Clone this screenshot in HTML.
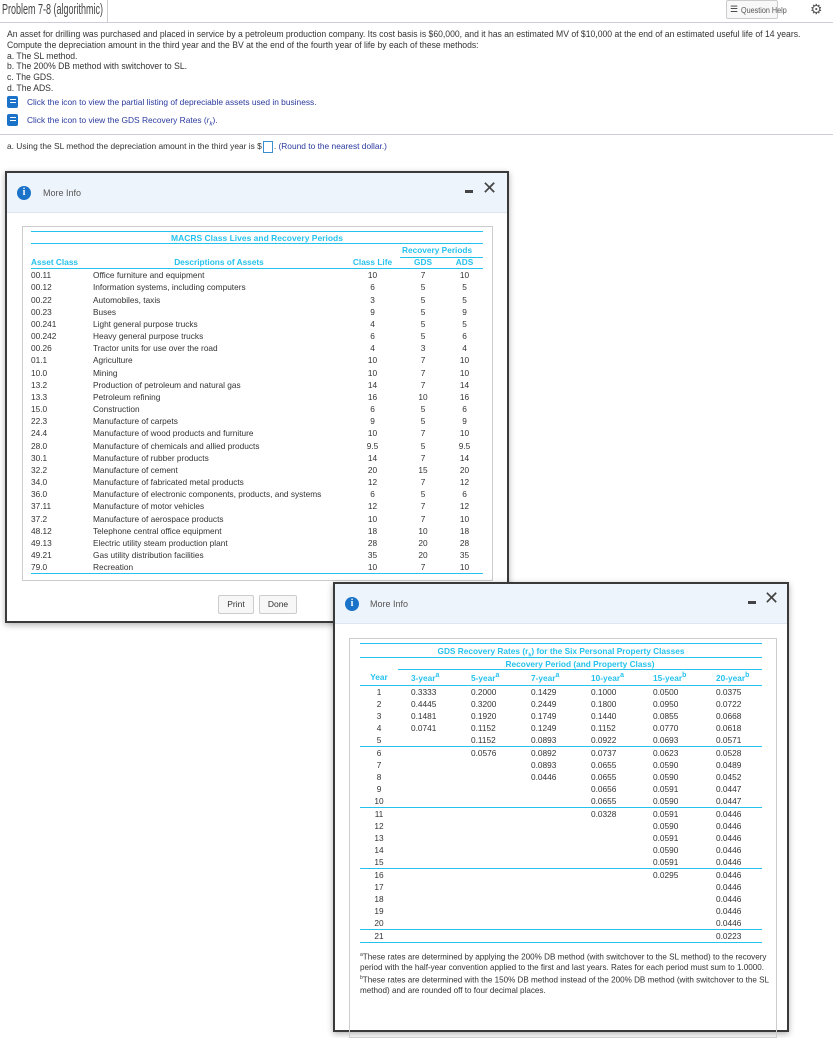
<!DOCTYPE html>
<html><head><meta charset="utf-8"><style>
*{margin:0;padding:0;box-sizing:border-box}
body{width:833px;height:1024px;overflow:hidden;background:#fff;font-family:"Liberation Sans",Arial,sans-serif;color:#333;position:relative;font-size:8.5px}
.a{position:absolute;white-space:nowrap}
.cy{color:#25c2ee;font-weight:bold}
.dlg{position:absolute;background:#fff;border:2px solid #3a3a3a;box-shadow:0 2px 6px rgba(0,0,0,.3)}
.hd{position:absolute;left:0;right:0;top:0;height:40px;background:#eef4fb;border-bottom:1px solid #dde6f0}
.ic{position:absolute;width:14px;height:14px;border-radius:50%;background:#1a73c9;color:#fff;font:bold 10px "Liberation Serif",serif;text-align:center;line-height:14px}
.mi{position:absolute;font-size:9px;color:#555}
.x{position:absolute;font-size:18px;color:#444;font-weight:normal}
.mn{position:absolute;width:8px;height:3px;background:#444}
table{border-collapse:collapse;table-layout:fixed}
td{padding:0;height:12.17px;line-height:12.17px;font-size:8.3px;white-space:nowrap;overflow:visible}
.m td:nth-child(3),.m td:nth-child(4),.m td:nth-child(5){text-align:center}
.g td{height:12px;line-height:12px;padding-left:13px}
.g td:first-child{text-align:center;padding-left:0}
.g tr.s td{border-bottom:1.5px solid #25c2ee}
.lk{color:#2a3a9e}
.bk{position:absolute;width:11px;height:12px;background:#1a73c9;border-radius:2px}
.bk:after{content:"";position:absolute;left:3px;top:3px;width:6px;height:1px;background:#fff;box-shadow:0 3px 0 #fff}
</style></head><body>
<div class="a" style="left:2px;top:1px;font-size:15px;color:#444;transform:scaleX(0.6);transform-origin:0 0">Problem 7-8 (algorithmic)</div>
<div class="a" style="left:107px;top:0;width:1px;height:22px;background:#ccc"></div>
<div class="a" style="left:0;top:22px;width:833px;height:1px;background:#ccd"></div>
<div class="a" style="left:726px;top:0;width:52px;height:19px;border:1px solid #ccc;border-radius:2px;background:#f8f8f8"></div>
<div class="a" style="left:730px;top:4px;font-size:9px;color:#333">☰</div>
<div class="a" style="left:741px;top:5px;font-size:8.5px;color:#555;transform:scaleX(0.85);transform-origin:0 0">Question Help</div>
<div class="a" style="left:810px;top:1px;font-size:14px;color:#555">⚙</div>

<div class="a" style="left:7px;top:29px;line-height:10.8px;font-size:8.8px;color:#333;transform:scaleX(0.98);transform-origin:0 0">An asset for drilling was purchased and placed in service by a petroleum production company. Its cost basis is $60,000, and it has an estimated MV of $10,000 at the end of an estimated useful life of 14 years.<br>Compute the depreciation amount in the third year and the BV at the end of the fourth year of life by each of these methods:<br>a. The SL method.<br>b. The 200% DB method with switchover to SL.<br>c. The GDS.<br>d. The ADS.</div>
<div class="bk" style="left:7px;top:96px"></div>
<div class="a lk" style="left:27px;top:97px;font-size:8.4px">Click the icon to view the partial listing of depreciable assets used in business.</div>
<div class="bk" style="left:7px;top:114px"></div>
<div class="a lk" style="left:27px;top:115px;font-size:8.4px">Click the icon to view the GDS Recovery Rates (<i>r<sub style="font-size:6px">k</sub></i>).</div>
<div class="a" style="left:0;top:134px;width:833px;height:1px;background:#ccd"></div>
<div class="a" style="left:7px;top:141px;font-size:8.4px">a. Using the SL method the depreciation amount in the third year is $<span style="display:inline-block;width:10px;height:12px;border:1px solid #3a8fd0;vertical-align:middle;margin:0 1px"></span>. <span class="lk">(Round to the nearest dollar.)</span></div>

<div class="dlg" style="left:5px;top:171px;width:504px;height:452px">
 <div class="hd"></div>
 <div class="ic" style="left:10px;top:13px">i</div>
 <div class="mi" style="left:36px;top:15px">More Info</div>
 <div class="mn" style="left:458px;top:17px"></div>
 <div class="x" style="left:475px;top:5px">✕</div>
 <div class="a" style="left:15px;top:53px;width:471px;height:355px;border:1px solid #ccc"></div>
 <div class="a" style="left:24px;top:58px">
  <div style="width:452px;border-top:1.5px solid #25c2ee;height:12px;text-align:center;line-height:12px;font-size:8.5px" class="cy">MACRS Class Lives and Recovery Periods</div>
  <div style="width:452px;border-top:1.5px solid #25c2ee"></div>
  <div class="a cy" style="left:371px;top:14px;font-size:8.3px">Recovery Periods</div>
  <div class="a" style="left:369px;top:26px;width:83px;border-top:1.5px solid #25c2ee"></div>
  <table class="m" style="width:452px;margin-top:12px">
   <colgroup><col style="width:62px"><col style="width:252px"><col style="width:55px"><col style="width:46px"><col style="width:37px"></colgroup>
   <tr class="cy" style="border-bottom:1.5px solid #25c2ee"><td>Asset Class</td><td style="text-align:center">Descriptions of Assets</td><td>Class Life</td><td>GDS</td><td>ADS</td></tr>
   <tr><td>00.11</td><td>Office furniture and equipment</td><td>10</td><td>7</td><td>10</td></tr>
   <tr><td>00.12</td><td>Information systems, including computers</td><td>6</td><td>5</td><td>5</td></tr>
   <tr><td>00.22</td><td>Automobiles, taxis</td><td>3</td><td>5</td><td>5</td></tr>
   <tr><td>00.23</td><td>Buses</td><td>9</td><td>5</td><td>9</td></tr>
   <tr><td>00.241</td><td>Light general purpose trucks</td><td>4</td><td>5</td><td>5</td></tr>
   <tr><td>00.242</td><td>Heavy general purpose trucks</td><td>6</td><td>5</td><td>6</td></tr>
   <tr><td>00.26</td><td>Tractor units for use over the road</td><td>4</td><td>3</td><td>4</td></tr>
   <tr><td>01.1</td><td>Agriculture</td><td>10</td><td>7</td><td>10</td></tr>
   <tr><td>10.0</td><td>Mining</td><td>10</td><td>7</td><td>10</td></tr>
   <tr><td>13.2</td><td>Production of petroleum and natural gas</td><td>14</td><td>7</td><td>14</td></tr>
   <tr><td>13.3</td><td>Petroleum refining</td><td>16</td><td>10</td><td>16</td></tr>
   <tr><td>15.0</td><td>Construction</td><td>6</td><td>5</td><td>6</td></tr>
   <tr><td>22.3</td><td>Manufacture of carpets</td><td>9</td><td>5</td><td>9</td></tr>
   <tr><td>24.4</td><td>Manufacture of wood products and furniture</td><td>10</td><td>7</td><td>10</td></tr>
   <tr><td>28.0</td><td>Manufacture of chemicals and allied products</td><td>9.5</td><td>5</td><td>9.5</td></tr>
   <tr><td>30.1</td><td>Manufacture of rubber products</td><td>14</td><td>7</td><td>14</td></tr>
   <tr><td>32.2</td><td>Manufacture of cement</td><td>20</td><td>15</td><td>20</td></tr>
   <tr><td>34.0</td><td>Manufacture of fabricated metal products</td><td>12</td><td>7</td><td>12</td></tr>
   <tr><td>36.0</td><td>Manufacture of electronic components, products, and systems</td><td>6</td><td>5</td><td>6</td></tr>
   <tr><td>37.11</td><td>Manufacture of motor vehicles</td><td>12</td><td>7</td><td>12</td></tr>
   <tr><td>37.2</td><td>Manufacture of aerospace products</td><td>10</td><td>7</td><td>10</td></tr>
   <tr><td>48.12</td><td>Telephone central office equipment</td><td>18</td><td>10</td><td>18</td></tr>
   <tr><td>49.13</td><td>Electric utility steam production plant</td><td>28</td><td>20</td><td>28</td></tr>
   <tr><td>49.21</td><td>Gas utility distribution facilities</td><td>35</td><td>20</td><td>35</td></tr>
   <tr style="border-bottom:1.5px solid #25c2ee"><td>79.0</td><td>Recreation</td><td>10</td><td>7</td><td>10</td></tr>
  </table>
 </div>
 <div class="a" style="left:211px;top:422px;width:36px;height:19px;border:1px solid #ccc;border-radius:2px;background:#f7f7f7;text-align:center;line-height:17px;font-size:8.5px">Print</div>
 <div class="a" style="left:252px;top:422px;width:38px;height:19px;border:1px solid #ccc;border-radius:2px;background:#f7f7f7;text-align:center;line-height:17px;font-size:8.5px">Done</div>
</div>

<div class="dlg" style="left:333px;top:582px;width:456px;height:450px">
 <div class="hd"></div>
 <div class="ic" style="left:10px;top:13px">i</div>
 <div class="mi" style="left:35px;top:15px">More Info</div>
 <div class="mn" style="left:413px;top:17px"></div>
 <div class="x" style="left:429px;top:4px">✕</div>
 <div class="a" style="left:14px;top:54px;width:428px;height:400px;border:1px solid #ccc"></div>
 <div class="a" style="left:25px;top:59px;width:402px">
  <div style="border-top:1.5px solid #25c2ee;height:14px;text-align:center;line-height:14px;font-size:8.3px" class="cy">GDS Recovery Rates (r<sub style="font-size:5.5px">k</sub>) for the Six Personal Property Classes</div>
  <div style="border-top:1.5px solid #25c2ee;height:12px;text-align:center;line-height:12px;font-size:8.3px;padding-left:38px" class="cy">Recovery Period (and Property Class)</div>
  <div style="margin-left:38px;border-top:1.5px solid #25c2ee"></div>
  <table class="g" style="width:402px">
   <colgroup><col style="width:38px"><col style="width:60px"><col style="width:60px"><col style="width:60px"><col style="width:62px"><col style="width:63px"><col style="width:59px"></colgroup>
   <tr class="cy s" style="height:15px"><td>Year</td><td>3-year<sup>a</sup></td><td>5-year<sup>a</sup></td><td>7-year<sup>a</sup></td><td>10-year<sup>a</sup></td><td>15-year<sup>b</sup></td><td>20-year<sup>b</sup></td></tr>
   <tr><td>1</td><td>0.3333</td><td>0.2000</td><td>0.1429</td><td>0.1000</td><td>0.0500</td><td>0.0375</td></tr>
   <tr><td>2</td><td>0.4445</td><td>0.3200</td><td>0.2449</td><td>0.1800</td><td>0.0950</td><td>0.0722</td></tr>
   <tr><td>3</td><td>0.1481</td><td>0.1920</td><td>0.1749</td><td>0.1440</td><td>0.0855</td><td>0.0668</td></tr>
   <tr><td>4</td><td>0.0741</td><td>0.1152</td><td>0.1249</td><td>0.1152</td><td>0.0770</td><td>0.0618</td></tr>
   <tr class="s"><td>5</td><td></td><td>0.1152</td><td>0.0893</td><td>0.0922</td><td>0.0693</td><td>0.0571</td></tr>
   <tr><td>6</td><td></td><td>0.0576</td><td>0.0892</td><td>0.0737</td><td>0.0623</td><td>0.0528</td></tr>
   <tr><td>7</td><td></td><td></td><td>0.0893</td><td>0.0655</td><td>0.0590</td><td>0.0489</td></tr>
   <tr><td>8</td><td></td><td></td><td>0.0446</td><td>0.0655</td><td>0.0590</td><td>0.0452</td></tr>
   <tr><td>9</td><td></td><td></td><td></td><td>0.0656</td><td>0.0591</td><td>0.0447</td></tr>
   <tr class="s"><td>10</td><td></td><td></td><td></td><td>0.0655</td><td>0.0590</td><td>0.0447</td></tr>
   <tr><td>11</td><td></td><td></td><td></td><td>0.0328</td><td>0.0591</td><td>0.0446</td></tr>
   <tr><td>12</td><td></td><td></td><td></td><td></td><td>0.0590</td><td>0.0446</td></tr>
   <tr><td>13</td><td></td><td></td><td></td><td></td><td>0.0591</td><td>0.0446</td></tr>
   <tr><td>14</td><td></td><td></td><td></td><td></td><td>0.0590</td><td>0.0446</td></tr>
   <tr class="s"><td>15</td><td></td><td></td><td></td><td></td><td>0.0591</td><td>0.0446</td></tr>
   <tr><td>16</td><td></td><td></td><td></td><td></td><td>0.0295</td><td>0.0446</td></tr>
   <tr><td>17</td><td></td><td></td><td></td><td></td><td></td><td>0.0446</td></tr>
   <tr><td>18</td><td></td><td></td><td></td><td></td><td></td><td>0.0446</td></tr>
   <tr><td>19</td><td></td><td></td><td></td><td></td><td></td><td>0.0446</td></tr>
   <tr class="s"><td>20</td><td></td><td></td><td></td><td></td><td></td><td>0.0446</td></tr>
   <tr class="s"><td>21</td><td></td><td></td><td></td><td></td><td></td><td>0.0223</td></tr>
  </table>
  <div style="margin-top:7px;font-size:8.1px;line-height:10.5px;white-space:normal;width:410px"><sup style="font-size:5px">a</sup>These rates are determined by applying the 200% DB method (with switchover to the SL method) to the recovery period with the half-year convention applied to the first and last years. Rates for each period must sum to 1.0000.<br><sup style="font-size:5px">b</sup>These rates are determined with the 150% DB method instead of the 200% DB method (with switchover to the SL method) and are rounded off to four decimal places.</div>
 </div>
</div>
</body></html>
